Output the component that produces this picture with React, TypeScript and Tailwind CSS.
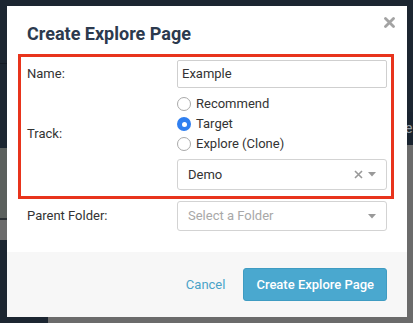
import React from "react";

function Radio({ checked, label }: { checked?: boolean; label: string }) {
  return (
    <div className="flex items-center h-[20px]">
      {checked ? (
        <span className="w-[14px] h-[14px] rounded-full bg-[#2f7ff0] flex items-center justify-center">
          <span className="w-[5px] h-[5px] rounded-full bg-white" />
        </span>
      ) : (
        <span className="w-[14px] h-[14px] rounded-full border border-[#a9a9a9] bg-white" />
      )}
      <span className="ml-[5px] text-[13px] text-[#333]">{label}</span>
    </div>
  );
}

function Caret() {
  return (
    <svg width="8" height="5" viewBox="0 0 8 5">
      <path d="M0 0 L8 0 L4 4.5 Z" fill="#999" />
    </svg>
  );
}

export default function App() {
  return (
    <div
      className="relative w-[413px] h-[323px] overflow-hidden bg-[#1c2631]"
      style={{ fontFamily: "Roboto, 'Liberation Sans', sans-serif" }}
    >
      {/* background page blocks */}
      <div className="absolute left-0 top-[63px] w-[8px] h-px bg-[#141b24]" />
      <div className="absolute left-0 top-[148px] w-[8px] h-[70px] bg-[#5b605d]" />
      <div className="absolute left-0 top-[218px] w-[8px] h-[2px] bg-[#2a2f33]" />
      <div className="absolute left-0 top-[220px] w-[8px] h-[20px] bg-[#6b6b6b]" />
      <div className="absolute right-0 top-[112px] w-[8px] h-[33px] bg-[#1a2430] text-[#9aa0a6] text-[14px] leading-[33px]">e</div>
      <div className="absolute right-0 top-[145px] w-[8px] h-[178px] bg-[#6b6b6b]" />
      <div className="absolute left-[48px] top-[300px] right-0 h-[23px] bg-[#6b6b6b]" />

      {/* modal */}
      <div className="absolute left-[7px] top-[6px] w-[400px] h-[311px] bg-white flex flex-col">
        <div className="relative h-[48px] flex items-center pl-[20px]">
          <h1 className="text-[18px] font-bold text-[#2c3a4e] mt-[6px]">Create Explore Page</h1>
          <svg className="absolute right-[12px] top-[11px]" width="11" height="11" viewBox="0 0 11 11">
            <path d="M1.5 1.5 L9.5 9.5 M9.5 1.5 L1.5 9.5" stroke="#a3a3a3" strokeWidth="2.8" strokeLinecap="round" />
          </svg>
        </div>

        <div className="pl-[11px] pr-[13px]">
          <div className="border-[3px] border-[#e8341c] pl-[6px] pr-[4px] pt-[3px] pb-[6px]">
            <div className="flex items-center">
              <div className="w-[150px] text-[13px] text-[#333]">Name:</div>
              <div className="flex-1 h-[28px] border border-[#cfcfcf] rounded-[2px] flex items-center px-[4px] text-[13px] text-[#333]">
                Example
              </div>
            </div>
            <div className="flex items-center mt-[6px]">
              <div className="w-[150px] text-[13px] text-[#333] pt-[20px]">Track:</div>
              <div className="flex flex-col">
                <Radio label="Recommend" />
                <Radio checked label="Target" />
                <Radio label="Explore (Clone)" />
              </div>
            </div>
            <div className="flex mt-[5px]">
              <div className="w-[150px]" />
              <div className="flex-1 h-[31px] border border-[#d3d3d3] rounded-[3px] flex items-center pl-[10px] pr-[10px] text-[13px] text-[#333]">
                <span className="flex-1">Demo</span>
                <svg width="9" height="9" viewBox="0 0 9 9" className="mr-[5px]">
                  <path d="M1 1 L8 8 M8 1 L1 8" stroke="#999" strokeWidth="1.6" />
                </svg>
                <Caret />
              </div>
            </div>
          </div>
        </div>

        <div className="flex items-center px-[20px] mt-[2px]">
          <div className="w-[150px] text-[13px] text-[#333]">Parent Folder:</div>
          <div className="flex-1 h-[30px] border border-[#d3d3d3] rounded-[3px] flex items-center pl-[10px] pr-[10px] text-[13px] text-[#a8a8a8]">
            <span className="flex-1">Select a Folder</span>
            <Caret />
          </div>
        </div>

        <div className="mt-auto h-[65px] bg-[#f7f7f7] flex items-center justify-end pr-[20px]">
          <span className="text-[13px] text-[#4aa3c8] mr-[18px]">Cancel</span>
          <button className="h-[33px] px-[12px] bg-[#4aa8cf] border border-[#3f9cc2] rounded-[3px] text-white text-[13px] font-medium">
            Create Explore Page
          </button>
        </div>
      </div>
    </div>
  );
}
